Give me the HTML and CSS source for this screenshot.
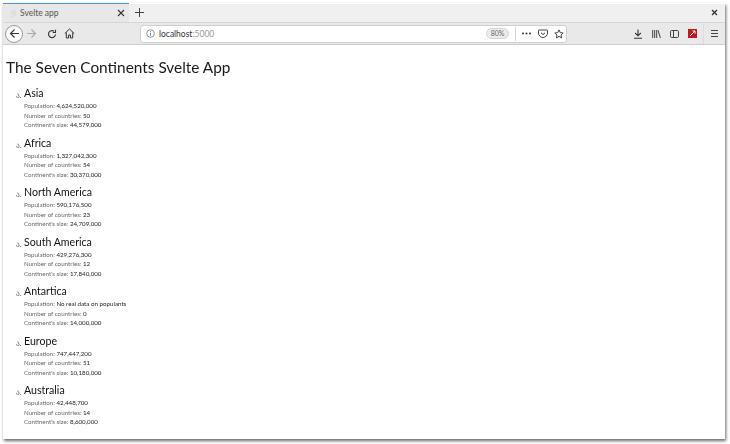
FILE: index.html
```html
<!DOCTYPE html>
<html lang="en">
<head>
<meta charset="utf-8">
<title>Svelte app</title>
<link rel="stylesheet" href="styles.css">
</head>
<body>
<div class="window">
  <div class="tabstrip">
    <div class="tab">
      <svg class="favicon" width="7" height="9" viewBox="0 0 7 9"><path d="M5.500 1 1.500 3v1.500l4-1v2l-4 2.500" fill="none" stroke="#dcdcdc" stroke-width="1.500"/></svg>
      <span class="tab-title">Svelte app</span>
      <svg class="tab-close" width="8" height="8" viewBox="0 0 8 8"><path d="M1 1l6 6M7 1L1 7" stroke="#333" stroke-width="1.100"/></svg>
    </div>
    <svg class="newtab" width="9" height="9" viewBox="0 0 9 9"><path d="M4.500 0v9M0 4.500h9" stroke="#444" stroke-width="1"/></svg>
    <svg class="win-close" width="7" height="7" viewBox="0 0 7 7"><path d="M1 1l5 5M6 1L1 6" stroke="#333" stroke-width="1.300"/></svg>
  </div>
  <div class="toolbar">
    <div class="back"><svg width="11" height="11" viewBox="0 0 11 11"><path d="M10 5.500H1.500M5.500 1.500l-4 4 4 4" fill="none" stroke="#333" stroke-width="1.100"/></svg></div>
    <svg class="fwd" width="11" height="11" viewBox="0 0 11 11"><path d="M1 5.500h8.500M5.500 1.500l4 4-4 4" fill="none" stroke="#aaa" stroke-width="1.100"/></svg>
    <svg class="reload" width="10" height="10" viewBox="0 0 10 10"><path d="M8.500 5.500A3.500 3.500 0 1 1 7 2.200M8.500.8v2.700H5.800" fill="none" stroke="#333" stroke-width="1.100"/></svg>
    <svg class="home" width="11" height="11" viewBox="0 0 11 11"><path d="M.8 5.500 5.500 1l4.700 4.500M2.300 4.500V10h2.300V7h1.800v3h2.300V4.500" fill="none" stroke="#333" stroke-width="1"/></svg>
    <div class="urlbar">
      <svg class="info" width="9" height="9" viewBox="0 0 9 9"><circle cx="4.500" cy="4.500" r="3.800" fill="none" stroke="#777" stroke-width=".8"/><path d="M4.500 4v2.700M4.500 2.200v1" stroke="#777" stroke-width=".9"/></svg>
      <span class="url"><span class="host">localhost</span>:5000</span>
      <span class="zoomlvl">80%</span>
      <span class="sep"></span>
      <svg class="dots" width="9" height="3" viewBox="0 0 9 3"><circle cx="1" cy="1.500" r="1" fill="#333"/><circle cx="4.500" cy="1.500" r="1" fill="#333"/><circle cx="8" cy="1.500" r="1" fill="#333"/></svg>
      <svg class="pocket" width="10" height="10" viewBox="0 0 10 10"><path d="M1 1h8a.500.500 0 0 1 .500.500V4a4.500 4.500 0 0 1-9 0V1.500A.500.500 0 0 1 1 1z" fill="none" stroke="#333" stroke-width=".9"/><path d="M3 3.800 5 5.600l2-1.800" fill="none" stroke="#333" stroke-width="1"/></svg>
      <svg class="star" width="10" height="10" viewBox="0 0 11 11"><path d="M5.500 1 6.900 4l3.200.4-2.400 2.200.7 3.200-2.900-1.700-2.900 1.700.7-3.200L.9 4.400 4.100 4z" fill="none" stroke="#333" stroke-width="1"/></svg>
    </div>
    <div class="tools">
      <svg class="t-dl" width="8" height="10" viewBox="0 0 8 10"><path d="M4 .5v6M1.200 4 4 6.800 6.800 4M0 9.300h8" fill="none" stroke="#333" stroke-width="1.100"/></svg>
      <svg class="t-lib" width="9" height="8" viewBox="0 0 9 8"><path d="M.7 0v8M2.700 0v8M4.700 0v8M6 .2 8.400 8" fill="none" stroke="#444" stroke-width="1"/></svg>
      <svg class="t-side" width="9" height="8" viewBox="0 0 9 8"><rect x=".5" y=".5" width="8" height="7" rx="1.200" fill="none" stroke="#444"/><path d="M3.500 .5v7" stroke="#444"/></svg>
      <svg class="t-ext" width="9" height="9" viewBox="0 0 9 9"><rect width="9" height="9" fill="#c8141c"/><path d="M2 7 7 2M4.500 2H7v2.500" fill="none" stroke="#fff" stroke-width="1"/></svg>
      <span class="sep2"></span>
      <svg class="t-menu" width="7" height="7" viewBox="0 0 7 7"><path d="M0 .5h7M0 3.500h7M0 6.500h7" stroke="#444"/></svg>
    </div>
  </div>
  <main class="page">
    <h1>The Seven Continents Svelte App</h1>
    <ol class="list">
      <li class="item"><span class="mark">ა.</span><div><h2>Asia</h2><p>Population: <b>4,624,520,000</b></p><p>Number of countries: <b>50</b></p><p>Continent's size: <b>44,579,000</b></p></div></li>
      <li class="item"><span class="mark">ა.</span><div><h2>Africa</h2><p>Population: <b>1,327,042,300</b></p><p>Number of countries: <b>54</b></p><p>Continent's size: <b>30,370,000</b></p></div></li>
      <li class="item"><span class="mark">ა.</span><div><h2>North America</h2><p>Population: <b>590,176,500</b></p><p>Number of countries: <b>23</b></p><p>Continent's size: <b>24,709,000</b></p></div></li>
      <li class="item"><span class="mark">ა.</span><div><h2>South America</h2><p>Population: <b>429,276,300</b></p><p>Number of countries: <b>12</b></p><p>Continent's size: <b>17,840,000</b></p></div></li>
      <li class="item"><span class="mark">ა.</span><div><h2>Antartica</h2><p>Population: <b>No real data on populants</b></p><p>Number of countries: <b>0</b></p><p>Continent's size: <b>14,000,000</b></p></div></li>
      <li class="item"><span class="mark">ა.</span><div><h2>Europe</h2><p>Population: <b>747,447,200</b></p><p>Number of countries: <b>51</b></p><p>Continent's size: <b>10,180,000</b></p></div></li>
      <li class="item"><span class="mark">ა.</span><div><h2>Australia</h2><p>Population: <b>42,448,700</b></p><p>Number of countries: <b>14</b></p><p>Continent's size: <b>8,600,000</b></p></div></li>
    </ol>
  </main>
</div>
</body>
</html>
```
FILE: styles.css
```css
* { box-sizing: border-box; }
html, body { margin: 0; height: 100%; background: #fff; }
body { padding: 3px 5px 0 3px; font-family: Lato, "Noto Sans", "DejaVu Sans", sans-serif; overflow: hidden; }
.window { height: 436px; display: flex; flex-direction: column; background: #fff; box-shadow: 1px 2px 3px rgba(0,0,0,.6); filter: blur(.3px); }
.tabstrip { height: 19px; flex: none; display: flex; align-items: center; background: linear-gradient(#fff 1px, #f0f0f0 1px); }
.tab { width: 126px; height: 19px; display: flex; align-items: center; background: #e8e8e8; border-top: 1px solid #4a94d8; padding-left: 7px; }
.favicon { flex: none; }
.tab-title { font-size: 8.500px; color: #555; margin-left: 3px; flex: 1; }
.tab-close { margin-right: 4px; flex: none; }
.newtab { margin-left: 6px; flex: none; }
.win-close { margin-left: auto; margin-right: 7px; flex: none; }
.toolbar { height: 23px; flex: none; display: flex; align-items: center; background: #e9e9e9; border-top: 1px solid #d6d6d6; border-bottom: 1px solid #cdcdcd; }
.back { width: 18px; height: 18px; margin-left: 2px; border-radius: 50%; background: #fbfbfb; border: 1px solid #9a9a9a; display: flex; align-items: center; justify-content: center; flex: none; }
.fwd { margin-left: 3px; flex: none; }
.reload { margin-left: 10px; flex: none; }
.home { margin-left: 7px; flex: none; }
.urlbar { width: 427px; height: 18px; margin-left: 65px; background: #fff; border: 1px solid #cfcfcf; border-radius: 3px; display: flex; align-items: center; padding: 0 2px 0 5px; flex: none; }
.info { flex: none; }
.url { margin-left: 4px; font-size: 8.500px; color: #999; flex: 1; }
.host { color: #333; }
.zoomlvl { font-size: 7px; color: #666; background: #ececec; border: 1px solid #d5d5d5; border-radius: 6px; width: 23px; text-align: center; line-height: 9px; flex: none; }
.sep { width: 1px; height: 14px; background: #d4d4d4; margin: 0 6px; flex: none; }
.dots { flex: none; }
.pocket { margin-left: 7px; flex: none; }
.star { margin-left: 6px; flex: none; }
.tools { display: flex; align-items: center; margin-left: 67px; flex: none; }
.t-lib { margin-left: 10px; }
.t-side { margin-left: 9px; }
.t-ext { margin-left: 9px; }
.sep2 { width: 1px; height: 20px; background: #dcdcdc; margin-left: 6px; }
.t-menu { margin-left: 7px; }
.page { flex: 1; padding-left: 3px; color: #222; overflow: hidden; }
h1 { margin: 12px 0 0; font-size: 15.400px; font-weight: 400; line-height: 21px; color: #1b1b1b; }
.list { list-style: none; margin: 9px 0 0; padding: 0 0 0 10px; }
.item { display: flex; height: 49.500px; }
.mark { font-size: 7.500px; color: #666; line-height: 13px; width: 8px; padding-top: 2px; flex: none; }
h2 { margin: 0; font-size: 10.600px; font-weight: 400; line-height: 13px; color: #111; }
p { margin: 0; font-size: 6.200px; line-height: 9.500px; color: #666; white-space: nowrap; }
h2 + p { margin-top: 1px; }
b { font-weight: 400; color: #222; }
```
